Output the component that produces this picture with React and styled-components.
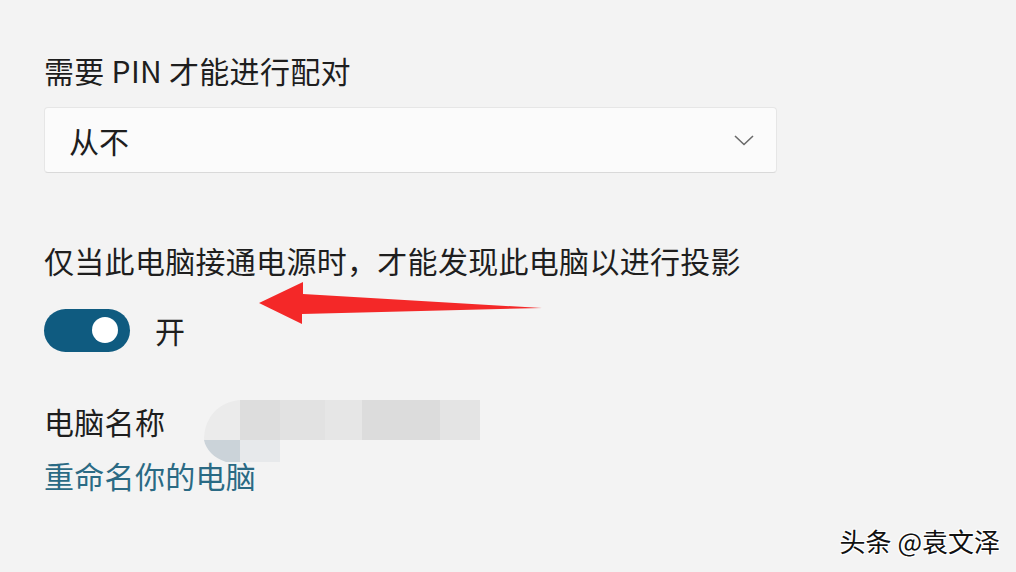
import React, { useState } from "react";
import styled, { createGlobalStyle } from "styled-components";

const GlobalStyle = createGlobalStyle`
  html, body {
    margin: 0;
    padding: 0;
    background: #f3f3f3;
  }
  body {
    font-family: "Noto Sans CJK SC", "Noto Sans", sans-serif;
    color: #1c1c1c;
  }
`;

const Page = styled.div`
  position: relative;
  width: 1016px;
  height: 572px;
  overflow: hidden;
  box-sizing: border-box;
  padding: 50px 0 0 44px;
  background: #f3f3f3;
`;

const Label = styled.div`
  font-size: 30px;
  line-height: 40px;
  letter-spacing: 0.3px;
  color: #1e1e1e;
  margin-top: ${(p) => p.top || 0}px;
`;

const Select = styled.div`
  margin-top: 17px;
  width: 733px;
  height: 66px;
  box-sizing: border-box;
  display: flex;
  align-items: center;
  justify-content: space-between;
  padding: 0 22px 0 24px;
  background: #fbfbfb;
  border: 1px solid #e6e6e6;
  border-bottom-color: #d9d9d9;
  border-radius: 4px;
  font-size: 30px;
  color: #1e1e1e;
`;

const ToggleRow = styled.div`
  margin-top: 28px;
  display: flex;
  align-items: center;
  gap: 25px;
  font-size: 30px;
  color: #1e1e1e;
`;

const Switch = styled.button`
  width: 86px;
  height: 43px;
  border: none;
  border-radius: 22px;
  padding: 0 12px;
  background: ${(p) => (p.on ? "#0f5b80" : "#bbb")};
  display: flex;
  align-items: center;
  justify-content: ${(p) => (p.on ? "flex-end" : "flex-start")};
  cursor: pointer;
`;

const Knob = styled.span`
  width: 26px;
  height: 26px;
  border-radius: 50%;
  background: #ffffff;
`;

const NameRow = styled.div`
  position: relative;
  margin-top: 49px;
`;

const Mosaic = styled.svg`
  position: absolute;
  left: 160px;
  top: -1px;
`;

const LinkText = styled.a`
  display: block;
  margin-top: 14px;
  font-size: 30px;
  line-height: 40px;
  letter-spacing: 0.3px;
  color: #2a6a84;
  text-decoration: none;
`;

const Arrow = styled.svg`
  position: absolute;
  left: 255px;
  top: 278px;
`;

const Watermark = styled.div`
  position: absolute;
  right: 16px;
  bottom: 13px;
  font-size: 26px;
  color: #111;
  text-shadow: 1px 1px 0 #fff, -1px -1px 0 #fff, 1px -1px 0 #fff, -1px 1px 0 #fff;
`;

const App = () => {
  const [on, setOn] = useState(true);

  return (
    <Page>
      <GlobalStyle />
      <Label>需要 PIN 才能进行配对</Label>
      <Select>
        <span>从不</span>
        <svg width="20" height="11" viewBox="0 0 20 11">
          <path d="M1 1 L10 9.5 L19 1" fill="none" stroke="#6a6a6a" strokeWidth="1.6" />
        </svg>
      </Select>

      <Label top={67}>仅当此电脑接通电源时，才能发现此电脑以进行投影</Label>
      <ToggleRow>
        <Switch on={on ? 1 : 0} onClick={() => setOn(!on)}>
          <Knob />
        </Switch>
        <span>{on ? "开" : "关"}</span>
      </ToggleRow>

      <NameRow>
        <Label>电脑名称</Label>
        <Mosaic width="276" height="62" viewBox="0 0 276 62">
          <path d="M36 0 L36 40 L0 40 C0 18 14 2 36 0 Z" fill="#ebebeb" />
          <path d="M0 40 L36 40 L36 62 L22 62 C10 58 2 50 0 40 Z" fill="#cbd3d9" />
          <rect x="36" y="40" width="40" height="22" fill="#e7e9eb" />
          <rect x="36" y="0" width="40" height="40" fill="#dddddd" />
          <rect x="76" y="0" width="45" height="40" fill="#e2e2e2" />
          <rect x="121" y="0" width="37" height="40" fill="#e6e6e6" />
          <rect x="158" y="0" width="78" height="40" fill="#dcdcdc" />
          <rect x="236" y="0" width="40" height="40" fill="#e4e4e4" />
        </Mosaic>
      </NameRow>
      <LinkText href="#">重命名你的电脑</LinkText>

      <Arrow width="292" height="50" viewBox="0 0 292 50">
        <polygon points="4,25 48,4 48,16 287,30 47,36 47,46" fill="#f42828" />
      </Arrow>

      <Watermark>头条 @袁文泽</Watermark>
    </Page>
  );
};

export default App;
